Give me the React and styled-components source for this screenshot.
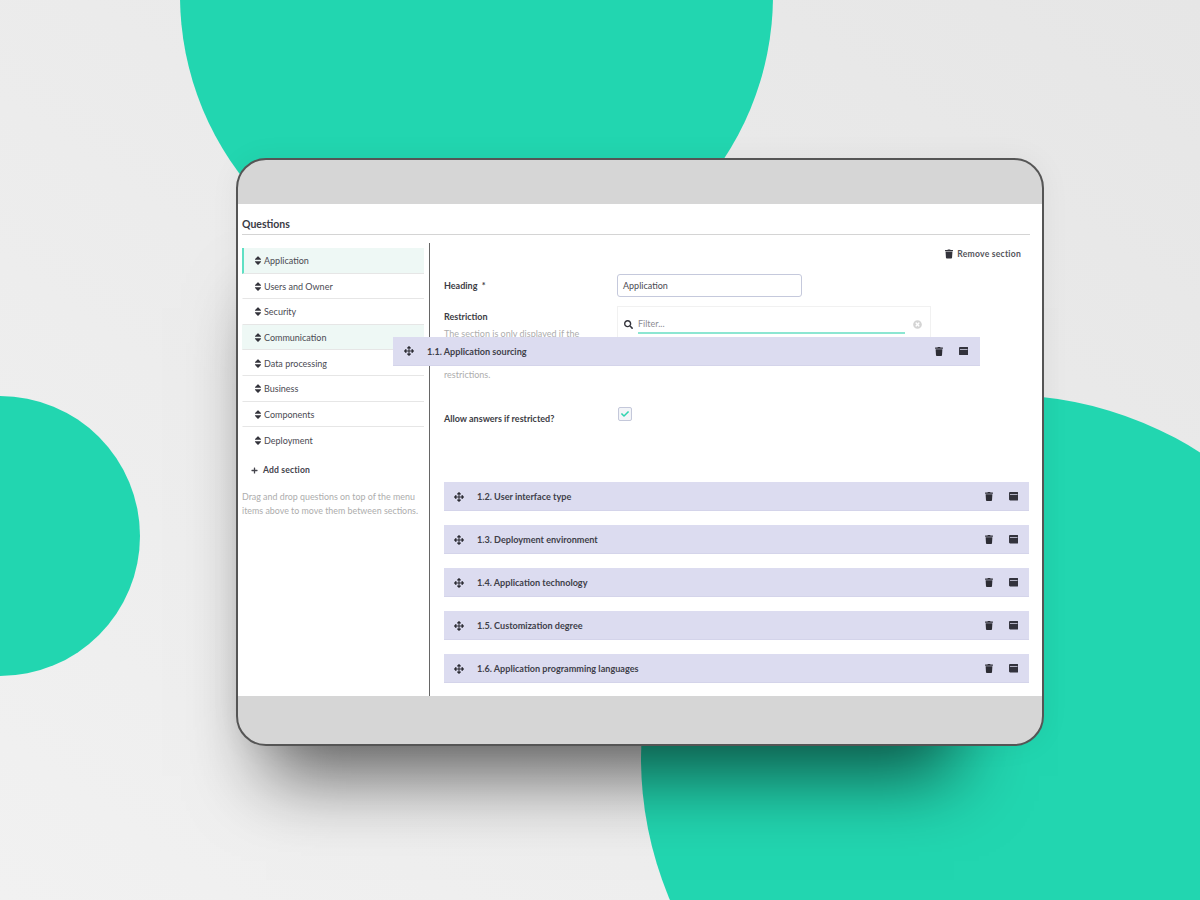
import React from 'react';
import styled, { createGlobalStyle } from 'styled-components';
import { FaSort, FaArrowsAlt, FaTrash, FaSearch, FaPlus, FaTimesCircle, FaCheck } from 'react-icons/fa';

const GlobalStyle = createGlobalStyle`
  html, body {
    margin: 0;
    padding: 0;
  }
  body {
    font-family: Lato, "Liberation Sans", sans-serif;
    color: #3a3a44;
  }
  * {
    box-sizing: border-box;
  }
`;

// Backdrop
const Page = styled.div`
  position: relative;
  width: 1200px;
  height: 900px;
  padding: 158px 0 0 236px;
  overflow: hidden;
  background: linear-gradient(215deg, #e6e6e6 0%, #ebebeb 45%, #f1f1f1 100%);
`;

const Blob = styled.div`
  position: absolute;
  left: ${(p) => p.$x - p.$r}px;
  top: ${(p) => p.$y - p.$r}px;
  width: ${(p) => p.$r * 2}px;
  height: ${(p) => p.$r * 2}px;
  border-radius: 50%;
  background: #22d6b0;
`;

// Device
const Frame = styled.div`
  position: relative;
  width: 808px;
  height: 588px;
  display: flex;
  flex-direction: column;
  border: 2px solid #555555;
  border-radius: 30px;
  background: #d6d6d6;
  box-shadow: -30px 90px 70px -60px rgba(0, 0, 0, 0.6), 0 0 30px rgba(0, 0, 0, 0.05);
`;

const ChromeBar = styled.div`
  flex: none;
  height: ${(p) => p.$height}px;
`;

const Screen = styled.div`
  position: relative;
  flex: 1;
  min-height: 0;
  display: flex;
  flex-direction: column;
  padding: 0 12px 0 4px;
  background: #ffffff;
`;

const PageTitle = styled.h2`
  flex: none;
  height: 31px;
  margin: 0;
  padding-top: 13px;
  font-size: 10.5px;
  line-height: 14px;
  font-weight: 700;
  color: #3a3a44;
  border-bottom: 1px solid #d4d4d4;
`;

const Columns = styled.div`
  flex: 1;
  min-height: 0;
  display: flex;
  margin-top: 8px;
`;

// Section menu
const Sidebar = styled.aside`
  flex: none;
  width: 187px;
  padding-top: 5px;
`;

const MenuList = styled.nav`
  display: flex;
  flex-direction: column;
`;

const MenuItem = styled.div`
  width: 182px;
  height: 25.6px;
  display: flex;
  align-items: center;
  gap: 2px;
  padding: 1px 0 0 ${(p) => (p.$current ? '10px' : '11px')};
  font-size: 9px;
  color: #4a4a52;
  background: ${(p) => (p.$selected ? '#eef8f5' : 'transparent')};
  border-left: ${(p) => (p.$current ? '2px solid #5fe0c4' : '1px solid transparent')};
  border-bottom: 1px solid #e6e6e6;

  &:last-child {
    border-bottom: none;
  }

  svg {
    width: 8px;
    height: 11px;
    color: #33333b;
  }
`;

const AddSection = styled.div`
  display: flex;
  align-items: center;
  gap: 5px;
  margin: 12.5px 0 0 9px;
  font-size: 8.6px;
  font-weight: 700;
  letter-spacing: 0.15px;
  color: #44444c;

  svg {
    width: 7px;
    height: 7px;
  }
`;

const Hint = styled.p`
  width: 182px;
  margin: 15px 0 0;
  font-size: 8.9px;
  line-height: 13.5px;
  color: #adadad;
`;

// Section editor
const Editor = styled.main`
  position: relative;
  flex: 1;
  min-width: 0;
  display: flex;
  flex-direction: column;
  padding-left: 14px;
  border-left: 1px solid #666666;
`;

const RemoveLink = styled.div`
  align-self: flex-end;
  display: flex;
  align-items: center;
  gap: 4px;
  height: 12px;
  margin: 5px 9px 0 0;
  font-size: 8.6px;
  font-weight: 700;
  letter-spacing: 0.22px;
  color: #55555c;

  svg {
    width: 8px;
    height: 10px;
    color: #33333b;
  }
`;

const FieldRow = styled.div`
  display: grid;
  grid-template-columns: 173px 1fr;
  margin-top: ${(p) => p.$top}px;
`;

const FieldLabel = styled.label`
  display: block;
  padding-top: ${(p) => p.$inset || 0}px;
  font-size: 9px;
  line-height: 13px;
  font-weight: 700;
  color: #3c3c44;
`;

const Help = styled.p`
  width: 145px;
  margin: 4px 0 0;
  font-size: 9px;
  line-height: 13.67px;
  color: #adadad;
`;

const TextField = styled.div`
  width: 185px;
  height: 23px;
  display: flex;
  align-items: center;
  padding-left: 5px;
  font-size: 9px;
  color: #4a4a52;
  border: 1.5px solid #c5c9dc;
  border-radius: 3px;
`;

const FilterBox = styled.div`
  width: 314px;
  height: 60px;
  display: flex;
  align-items: flex-start;
  padding: 10px 8px 0 6px;
  border: 1px solid #f1f1f1;
`;

const SearchIcon = styled(FaSearch)`
  flex: none;
  width: 9px;
  height: 9px;
  margin-top: 3px;
  color: #33333b;
`;

const FilterInput = styled.div`
  width: 268px;
  height: 17px;
  margin-left: 5px;
  font-size: 9px;
  line-height: 13px;
  color: #8d8d93;
  border-bottom: 2px solid #8ce6d2;
`;

const ClearIcon = styled(FaTimesCircle)`
  flex: none;
  width: 9px;
  height: 9px;
  margin: 3px 0 0 8px;
  color: #d4d4d4;
`;

const Checkbox = styled.div`
  width: 14px;
  height: 14px;
  margin-left: 0.5px;
  display: flex;
  align-items: center;
  justify-content: center;
  border: 1.5px solid #c4c8da;
  border-radius: 2px;
  background: #f2f4f8;

  svg {
    width: 8px;
    height: 8px;
    color: #2ed4b0;
  }
`;

const QuestionList = styled.div`
  display: flex;
  flex-direction: column;
  gap: 14px;
  margin-top: 57px;
`;

const QuestionBar = styled.div`
  width: 585px;
  height: 29px;
  display: flex;
  align-items: center;
  padding: 1px 11px 0 10px;
  font-size: 9.1px;
  font-weight: 700;
  color: #3f3f4a;
  background: #dcdcf0;
  border-bottom: 1px solid #d4d4ea;
`;

const DraggedBar = styled(QuestionBar)`
  position: absolute;
  left: -37px;
  top: 94px;
  z-index: 2;
  width: 587px;
  padding: 0 12px 0 11px;
`;

const MoveHandle = styled(FaArrowsAlt)`
  flex: none;
  width: 10px;
  height: 10px;
  margin-right: 13px;
  color: #2c2c34;
`;

const BarTitle = styled.span`
  flex: 1;
`;

const TrashButton = styled(FaTrash)`
  flex: none;
  width: 8px;
  height: 9px;
  margin-right: 16px;
  color: #2c2c34;
`;

const ArchiveSvg = styled.svg`
  flex: none;
  width: 9.5px;
  height: 8.5px;
  color: #33333d;
`;

const ArchiveIcon = () => (
  <ArchiveSvg viewBox="0 0 10 9">
    <path
      fill="currentColor"
      d="M1.2 0h7.6C9.5 0 10 .5 10 1.2v6.6C10 8.5 9.5 9 8.8 9H1.2C.5 9 0 8.5 0 7.8V1.2C0 .5.5 0 1.2 0zM1 2.4v.9h8v-.9z"
      fillRule="evenodd"
    />
  </ArchiveSvg>
);

const sections = [
  { name: 'Application', selected: true, current: true },
  { name: 'Users and Owner' },
  { name: 'Security' },
  { name: 'Communication', selected: true },
  { name: 'Data processing' },
  { name: 'Business' },
  { name: 'Components' },
  { name: 'Deployment' },
];

const questions = [
  '1.2. User interface type',
  '1.3. Deployment environment',
  '1.4. Application technology',
  '1.5. Customization degree',
  '1.6. Application programming languages',
];

const BarContent = ({ title }) => (
  <>
    <MoveHandle />
    <BarTitle>{title}</BarTitle>
    <TrashButton />
    <ArchiveIcon />
  </>
);

const App = () => {
  return (
    <Page>
      <GlobalStyle />
      <Blob $x={476.5} $y={-5} $r={296.5} />
      <Blob $x={0} $y={536} $r={140} />
      <Blob $x={1004} $y={758} $r={363} />
      <Frame>
        <ChromeBar $height={44} />
        <Screen>
          <PageTitle>Questions</PageTitle>
          <Columns>
            <Sidebar>
              <MenuList>
                {sections.map((s) => (
                  <MenuItem key={s.name} $selected={s.selected} $current={s.current}>
                    <FaSort />
                    {s.name}
                  </MenuItem>
                ))}
              </MenuList>
              <AddSection>
                <FaPlus />
                Add section
              </AddSection>
              <Hint>Drag and drop questions on top of the menu items above to move them between sections.</Hint>
            </Sidebar>
            <Editor>
              <DraggedBar>
                <BarContent title="1.1. Application sourcing" />
              </DraggedBar>
              <RemoveLink>
                <FaTrash />
                Remove section
              </RemoveLink>
              <FieldRow $top={14}>
                <FieldLabel $inset={5}>Heading&nbsp; *</FieldLabel>
                <TextField>Application</TextField>
              </FieldRow>
              <FieldRow $top={9}>
                <div>
                  <FieldLabel $inset={4}>Restriction</FieldLabel>
                  <Help>The section is only displayed if the answers given in the questionnaire match at least one of the selected restrictions.</Help>
                </div>
                <FilterBox>
                  <SearchIcon />
                  <FilterInput>Filter...</FilterInput>
                  <ClearIcon />
                </FilterBox>
              </FieldRow>
              <FieldRow $top={25}>
                <FieldLabel $inset={5.5}>Allow answers if restricted?</FieldLabel>
                <Checkbox>
                  <FaCheck />
                </Checkbox>
              </FieldRow>
              <QuestionList>
                {questions.map((q) => (
                  <QuestionBar key={q}>
                    <BarContent title={q} />
                  </QuestionBar>
                ))}
              </QuestionList>
            </Editor>
          </Columns>
        </Screen>
        <ChromeBar $height={48} />
      </Frame>
    </Page>
  );
};

export default App;
